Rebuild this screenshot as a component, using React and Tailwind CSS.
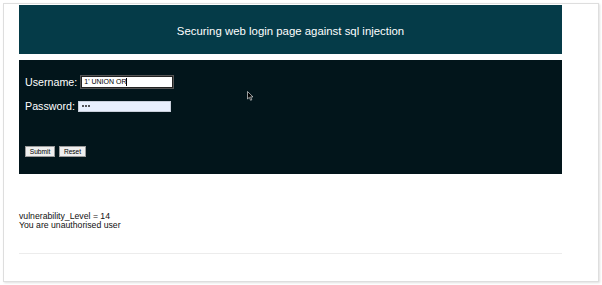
export default function App() {
  return (
    <div className="relative w-[602px] h-[285px] bg-white p-[3px] font-['Liberation_Sans',Arial,sans-serif] overflow-hidden">
      <div className="w-[596px] h-[279px] border border-[#dedede] shadow-[1px_1px_2px_rgba(0,0,0,0.12)] pl-[15px] pt-[1px]">
        <div className="w-[543px] h-[49px] bg-[#053b48] flex items-center justify-center pt-[2px]">
          <h1 className="text-white text-[11.4px] leading-[14px]">
            Securing web login page against sql injection
          </h1>
        </div>

        <form className="w-[543px] h-[114px] mt-[6px] bg-[#02151b] pl-[6px] pt-[16px]">
          <div className="flex items-center h-[12px]">
            <label className="text-white text-[10.7px] leading-[12px]">Username:</label>
            <div className="ml-[4px] w-[92px] h-[12px] bg-white border border-[#222] outline outline-1 outline-[#555] flex items-center pl-[2px]">
              <span className="text-black text-[7px] leading-[8px]">1' UNION OR</span>
              <span className="w-px h-[8px] bg-black" />
            </div>
          </div>
          <div className="flex items-center h-[12px] mt-[12px]">
            <label className="text-white text-[10.7px] leading-[12px]">Password:</label>
            <div className="ml-[3px] w-[93px] h-[11px] bg-[#e8f0fe] border border-[#c8cfdb] flex items-center gap-[1px] pl-[3px]">
              <span className="w-[2px] h-[2px] rounded-full bg-[#222]" />
              <span className="w-[2px] h-[2px] rounded-full bg-[#222]" />
              <span className="w-[2px] h-[2px] rounded-full bg-[#222]" />
            </div>
          </div>
          <div className="flex gap-[4px] mt-[34px]">
            <button type="button" className="w-[30px] h-[11px] bg-[#efefef] border border-[#9a9a9a] text-black text-[6.6px] leading-[9px] flex items-center justify-center">
              Submit
            </button>
            <button type="button" className="w-[27px] h-[11px] bg-[#efefef] border border-[#9a9a9a] text-black text-[6.6px] leading-[9px] flex items-center justify-center">
              Reset
            </button>
          </div>
        </form>

        <div className="mt-[38px] text-[#111] text-[8.7px] leading-[9px]">
          <p>vulnerability_Level = 14</p>
          <p>You are unauthorised user</p>
        </div>

        <hr className="w-[543px] mt-[23px] border-0 border-t border-[#ececec]" />
      </div>

      <svg className="absolute left-[247px] top-[91px]" width="7" height="10" viewBox="0 0 7 10">
        <path d="M0.5 0.5 L0.5 8 L2.3 6.3 L3.6 9.3 L4.8 8.8 L3.6 5.9 L6 5.9 Z" fill="#000" stroke="#fff" strokeWidth="0.6" />
      </svg>
    </div>
  );
}
